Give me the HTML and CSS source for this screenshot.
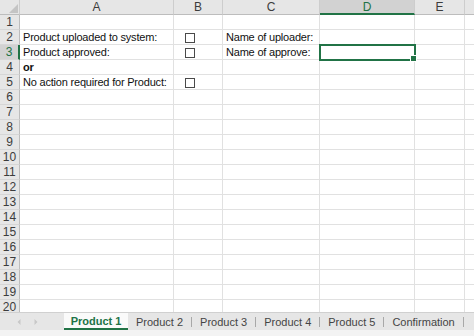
FILE: index.html
```html
<!DOCTYPE html>
<html>
<head>
<meta charset="utf-8">
<link rel="stylesheet" href="styles.css">
</head>
<body>
<div class="app">
  <div class="sheet">
    <div class="grid">
      <div class="corner"><svg width="20" height="15" viewBox="0 0 20 15"><polygon points="18,4 18,13 9,13" fill="#c4c4c4"/></svg></div>
      <div class="ch">A</div><div class="ch">B</div><div class="ch">C</div><div class="ch ch-sel">D</div><div class="ch">E</div><div class="ch"></div>

      <div class="rh">1</div><div class="c"></div><div class="c"></div><div class="c"></div><div class="c"></div><div class="c"></div><div class="c"></div>

      <div class="rh">2</div><div class="c">Product uploaded to system:</div><div class="c cb-cell"><span class="cb"></span></div><div class="c">Name of uploader:</div><div class="c"></div><div class="c"></div><div class="c"></div>

      <div class="rh rh-sel">3</div><div class="c">Product approved:</div><div class="c cb-cell"><span class="cb"></span></div><div class="c">Name of approve:</div><div class="c sel"></div><div class="c"></div><div class="c"></div>

      <div class="rh">4</div><div class="c bold">or</div><div class="c"></div><div class="c"></div><div class="c"></div><div class="c"></div><div class="c"></div>

      <div class="rh">5</div><div class="c">No action required for Product:</div><div class="c cb-cell"><span class="cb"></span></div><div class="c"></div><div class="c"></div><div class="c"></div><div class="c"></div>

      <div class="rh">6</div><div class="c"></div><div class="c"></div><div class="c"></div><div class="c"></div><div class="c"></div><div class="c"></div>
      <div class="rh">7</div><div class="c"></div><div class="c"></div><div class="c"></div><div class="c"></div><div class="c"></div><div class="c"></div>
      <div class="rh">8</div><div class="c"></div><div class="c"></div><div class="c"></div><div class="c"></div><div class="c"></div><div class="c"></div>
      <div class="rh">9</div><div class="c"></div><div class="c"></div><div class="c"></div><div class="c"></div><div class="c"></div><div class="c"></div>
      <div class="rh">10</div><div class="c"></div><div class="c"></div><div class="c"></div><div class="c"></div><div class="c"></div><div class="c"></div>
      <div class="rh">11</div><div class="c"></div><div class="c"></div><div class="c"></div><div class="c"></div><div class="c"></div><div class="c"></div>
      <div class="rh">12</div><div class="c"></div><div class="c"></div><div class="c"></div><div class="c"></div><div class="c"></div><div class="c"></div>
      <div class="rh">13</div><div class="c"></div><div class="c"></div><div class="c"></div><div class="c"></div><div class="c"></div><div class="c"></div>
      <div class="rh">14</div><div class="c"></div><div class="c"></div><div class="c"></div><div class="c"></div><div class="c"></div><div class="c"></div>
      <div class="rh">15</div><div class="c"></div><div class="c"></div><div class="c"></div><div class="c"></div><div class="c"></div><div class="c"></div>
      <div class="rh">16</div><div class="c"></div><div class="c"></div><div class="c"></div><div class="c"></div><div class="c"></div><div class="c"></div>
      <div class="rh">17</div><div class="c"></div><div class="c"></div><div class="c"></div><div class="c"></div><div class="c"></div><div class="c"></div>
      <div class="rh">18</div><div class="c"></div><div class="c"></div><div class="c"></div><div class="c"></div><div class="c"></div><div class="c"></div>
      <div class="rh">19</div><div class="c"></div><div class="c"></div><div class="c"></div><div class="c"></div><div class="c"></div><div class="c"></div>
      <div class="rh">20</div><div class="c"></div><div class="c"></div><div class="c"></div><div class="c"></div><div class="c"></div><div class="c"></div>
    </div>
  </div>
  <div class="tabbar">
    <div class="nav">
      <svg width="6" height="8" viewBox="0 0 6 8"><polygon points="4.5,1 1.5,4 4.5,7" fill="#c8c8c8"/></svg>
      <svg width="6" height="8" viewBox="0 0 6 8"><polygon points="1.5,1 4.5,4 1.5,7" fill="#c8c8c8"/></svg>
    </div>
    <div class="tab active">Product 1</div>
    <div class="tab">Product 2</div>
    <span class="sep"></span>
    <div class="tab">Product 3</div>
    <span class="sep"></span>
    <div class="tab">Product 4</div>
    <span class="sep"></span>
    <div class="tab">Product 5</div>
    <span class="sep"></span>
    <div class="tab">Confirmation</div>
    <span class="sep"></span>
  </div>
  <div class="footer"></div>
</div>
</body>
</html>
```

FILE: styles.css
```css
* { box-sizing: border-box; }
html, body { margin: 0; padding: 0; background: #fff; }
body {
  font-family: "Liberation Sans", Arial, sans-serif;
  font-size: 11px;
  color: #222;
}
.app {
  width: 474px;
  height: 336px;
  display: flex;
  flex-direction: column;
  overflow: hidden;
}
.sheet {
  height: 312px;
  flex: none;
  overflow: hidden;
}
.grid {
  display: grid;
  grid-template-columns: 20px 154px 49px 97px 95px 50px 40px;
  grid-auto-rows: 15px;
}
.corner {
  background: #e6e6e6;
  border-right: 1px solid #cdcdcd;
  border-bottom: 1px solid #bdbdbd;
  line-height: 0;
}
.ch {
  background: #e6e6e6;
  border-right: 1px solid #cdcdcd;
  border-bottom: 1px solid #bdbdbd;
  text-align: center;
  line-height: 15px;
  color: #3c3c3c;
  font-size: 12px;
}
.ch-sel {
  background: #d2d2d2;
  color: #217346;
  border-bottom: 2px solid #217346;
}
.rh {
  background: #e6e6e6;
  border-right: 1px solid #bdbdbd;
  border-bottom: 1px solid #d6d6d6;
  text-align: center;
  line-height: 15px;
  color: #3c3c3c;
  font-size: 12px;
}
.rh-sel {
  background: #d2d2d2;
  color: #217346;
  border-right: 2px solid #217346;
}
.c {
  border-right: 1px solid #e1e1e1;
  border-bottom: 1px solid #e1e1e1;
  line-height: 15px;
  padding-left: 3px;
  white-space: nowrap;
  letter-spacing: -0.2px;
  color: #111;
}
.bold { font-weight: bold; }
.cb-cell {
  padding-left: 11px;
  padding-top: 3px;
  line-height: 0;
}
.cb {
  display: inline-block;
  width: 10px;
  height: 10px;
  border: 1px solid #4a4a4a;
  background: #fff;
}
.sel {
  position: relative;
  outline: 2px solid #217346;
  outline-offset: -1px;
}
.sel::after {
  content: "";
  position: absolute;
  right: -3px;
  bottom: -3px;
  width: 5px;
  height: 5px;
  background: #217346;
  border: 1px solid #fff;
}
.tabbar {
  height: 18px;
  flex: none;
  background: #e6e6e6;
  border-top: 1px solid #d0d0d0;
  display: flex;
  align-items: stretch;
  font-size: 11px;
}
.nav {
  width: 64px;
  display: flex;
  align-items: center;
  gap: 11px;
  padding-left: 16px;
}
.tab {
  display: flex;
  align-items: center;
  padding: 0 8px;
  color: #444;
  white-space: nowrap;
}
.tab.active {
  width: 64px;
  justify-content: center;
  padding: 0;
  background: #fafafa;
  color: #217346;
  font-weight: bold;
  border-bottom: 2px solid #217346;
}
.sep {
  width: 1px;
  height: 10px;
  align-self: center;
  background: #a8a8a8;
}
.footer {
  flex: 1;
  background: #f3f3f3;
}
```
